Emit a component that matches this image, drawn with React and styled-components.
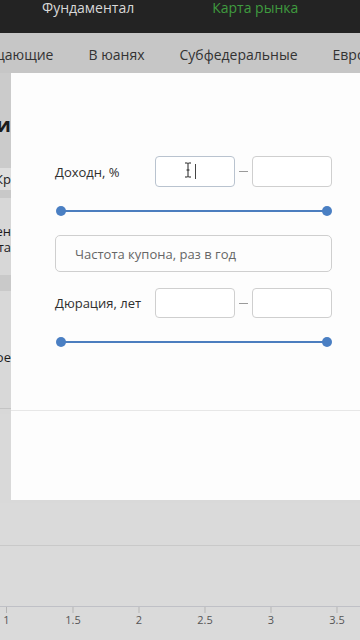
import React from 'react';
import styled, { createGlobalStyle } from 'styled-components';

const Global = createGlobalStyle`
  html, body { margin: 0; padding: 0; }
  body {
    width: 360px; height: 640px; overflow: hidden;
    background: #d9d9d9;
    font-family: "Open Sans", "Noto Sans", sans-serif;
  }
`;

const Page = styled.div`
  position: relative;
  width: 360px;
  height: 640px;
  overflow: hidden;
  display: flex;
  flex-direction: column;
  background: #d9d9d9;
`;

const TopBar = styled.div`
  height: 33px;
  flex: none;
  background: #232323;
  display: flex;
  align-items: flex-start;
  padding-left: 42px;
  gap: 78px;
  font-size: 14px;
  line-height: 15px;
`;

const TopLink = styled.span`
  color: ${p => (p.$active ? '#3f9b3f' : '#d8d8d8')};
  white-space: nowrap;
`;

const TabBar = styled.div`
  height: 40px;
  box-sizing: border-box;
  padding-top: 3px;
  flex: none;
  background: #c6c6c6;
  display: flex;
  align-items: center;
  gap: 35px;
  font-size: 14px;
  color: #333;
  white-space: nowrap;
  overflow: hidden;
`;

const Tab = styled.span`
  flex: none;
  &:first-child { margin-left: -4px; }
`;

const Underlay = styled.div`
  display: flex;
  flex-direction: column;
  flex: 1;
`;

const Band = styled.div`
  height: ${p => p.$h}px;
  box-sizing: border-box;
  flex: none;
  background: ${p => p.$bg || '#d8d8d8'};
  border-bottom: ${p => (p.$line ? '1px solid #c4c4c4' : 'none')};
  display: flex;
  flex-direction: column;
  justify-content: ${p => (p.$pt !== undefined ? 'flex-start' : 'center')};
  padding-top: ${p => p.$pt || 0}px;
`;

const Clip = styled.div`
  width: 11px;
  overflow: hidden;
  display: flex;
  justify-content: flex-end;
  white-space: nowrap;
  font-size: ${p => p.$size || 13}px;
  font-weight: ${p => (p.$bold ? 700 : 400)};
  color: #1c1c1c;
  line-height: ${p => p.$lh || 16}px;
`;

const Chart = styled.div`
  flex: 1;
  background: #dadada;
`;

const Modal = styled.div`
  position: absolute;
  left: 11px;
  top: 73px;
  width: 349px;
  height: 427px;
  background: #fdfdfd;
  display: flex;
  flex-direction: column;
`;

const ModalBody = styled.div`
  padding: 83px 28px 0 44px;
  display: flex;
  flex-direction: column;
`;

const RangeRow = styled.div`
  display: grid;
  grid-template-columns: 100px 80px 17px 80px;
  align-items: center;
  height: ${p => p.$h}px;
  margin-top: ${p => p.$mt || 0}px;
`;

const Label = styled.span`
  font-size: 13px;
  color: #2f2f2f;
  white-space: nowrap;
`;

const Dash = styled.span`
  justify-self: center;
  width: 9px;
  height: 1px;
  background: #9a9a9a;
`;

const Input = styled.div`
  position: relative;
  height: 100%;
  box-sizing: border-box;
  border: 1px solid ${p => (p.$focus ? '#b9c3cf' : '#cfcfcf')};
  border-radius: 4px;
  background: #fff;
`;

const Cursor = styled.svg`
  position: absolute;
  left: 28px;
  top: 5px;
`;

const Caret = styled.span`
  position: absolute;
  left: 39px;
  top: 7px;
  width: 1px;
  height: 15px;
  background: #444;
`;

const Slider = styled.div`
  position: relative;
  height: 10px;
  margin-top: ${p => p.$mt}px;
  margin-left: 1px;
  display: flex;
  align-items: center;
  justify-content: space-between;
`;

const Track = styled.div`
  position: absolute;
  left: 5px;
  right: 5px;
  top: 4px;
  height: 2px;
  background: #4c7ebf;
`;

const Knob = styled.span`
  position: relative;
  width: 10px;
  height: 10px;
  border-radius: 50%;
  background: #4a7fc3;
`;

const Field = styled.div`
  margin-top: 19px;
  height: 37px;
  box-sizing: border-box;
  border: 1px solid #cfcfcf;
  border-radius: 5px;
  display: flex;
  align-items: center;
  padding-left: 19px;
  font-size: 13px;
  color: #666;
  white-space: nowrap;
`;

const Divider = styled.div`
  margin-top: 63px;
  height: 1px;
  background: #e7e7e7;
`;

function RangeSlider({ mt }) {
  return (
    <Slider $mt={mt}>
      <Track />
      <Knob />
      <Knob />
    </Slider>
  );
}

function Axis() {
  const ticks = [
    ['1', 6.5],
    ['1.5', 73],
    ['2', 139],
    ['2.5', 205],
    ['3', 271],
    ['3.5', 337],
  ];
  return (
    <svg width="360" height="140" viewBox="0 0 360 140" style={{ display: 'block' }}>
      <line x1="0" y1="42.5" x2="360" y2="42.5" stroke="#c9c9c9" strokeWidth="1" />
      <line x1="0" y1="103.5" x2="360" y2="103.5" stroke="#bfc0c6" strokeWidth="1" />
      {ticks.map(([t, x]) => (
        <g key={t}>
          <line x1={x} y1="104" x2={x} y2="110" stroke="#b5b5b5" strokeWidth="1" />
          <text
            x={x}
            y="121"
            textAnchor="middle"
            fontSize="11"
            fill="#555"
            fontFamily="Open Sans, Noto Sans, sans-serif"
          >
            {t}
          </text>
        </g>
      ))}
    </svg>
  );
}

export default function App() {
  return (
    <>
      <Global />
      <Page>
        <TopBar>
          <TopLink>Фундаментал</TopLink>
          <TopLink $active>Карта рынка</TopLink>
        </TopBar>
        <TabBar>
          <Tab>цающие</Tab>
          <Tab>В юанях</Tab>
          <Tab>Субфедеральные</Tab>
          <Tab>Евро</Tab>
        </TabBar>
        <Underlay>
          <Band $h={95} $bg="#cbcbcb" $pt={40}>
            <Clip $bold $size={20} $lh={24}>Облигации</Clip>
          </Band>
          <Band $h={22} $bg="#dedede" $pt={3}>
            <Clip>Кр</Clip>
          </Band>
          <Band $h={8} $bg="#c8c8c8" />
          <Band $h={77} $bg="#d7d7d7" $pt={25}>
            <Clip>Измен</Clip>
            <Clip>Дата</Clip>
          </Band>
          <Band $h={16} $bg="#c9c9c9" />
          <Band $h={118} $bg="#d8d8d8" $line $pt={58}>
            <Clip>Новое</Clip>
          </Band>
          <Band $h={5} $bg="#d8d8d8" />
          <Chart>
            <Band $h={89} $bg="#d9d9d9" />
            <Axis />
          </Chart>
        </Underlay>

        <Modal>
          <ModalBody>
            <RangeRow $h={31}>
              <Label>Доходн, %</Label>
              <Input $focus>
                <Cursor width="8" height="16" viewBox="0 0 8 16">
                  <path
                    d="M1 1h2.2c.4 0 .8.4.8.8M7 1H4.8c-.4 0-.8.4-.8.8v12.4c0 .4-.4.8-.8.8H1M7 15H4.8c-.4 0-.8-.4-.8-.8M2.5 8h3"
                    fill="none"
                    stroke="#222"
                    strokeWidth="1"
                  />
                </Cursor>
                <Caret />
              </Input>
              <Dash />
              <Input />
            </RangeRow>
            <RangeSlider mt={19} />
            <Field>Частота купона, раз в год</Field>
            <RangeRow $h={30} $mt={16}>
              <Label>Дюрация, лет</Label>
              <Input />
              <Dash />
              <Input />
            </RangeRow>
            <RangeSlider mt={19} />
          </ModalBody>
          <Divider />
        </Modal>
      </Page>
    </>
  );
}
